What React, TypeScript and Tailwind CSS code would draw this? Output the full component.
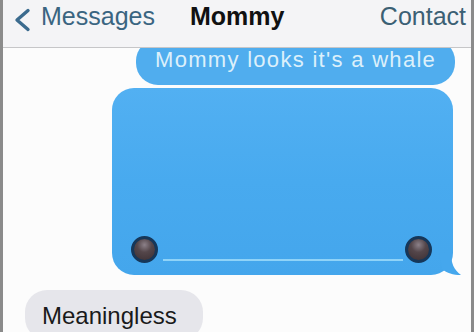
import React from "react";

const FONT = "font-['Liberation_Sans',Arial,sans-serif]";

function Chevron() {
  return (
    <svg width="18" height="24" viewBox="0 0 18 24" className="mt-[4px] shrink-0">
      <path d="M15 2.5 L4 12 L15 21.5" fill="none" stroke="#3b6b8e" strokeWidth="3.4" strokeLinecap="round" strokeLinejoin="round" />
    </svg>
  );
}

function Dot() {
  return (
    <div className="w-[27px] h-[27px] shrink-0 rounded-full border-[3px] border-[#163759] bg-[radial-gradient(circle_at_50%_28%,#8c8189_0%,#54464a_40%,#3b2f33_100%)]" />
  );
}

function Tail() {
  return (
    <svg width="24" height="22" viewBox="0 0 24 22" className="absolute right-[-10px] bottom-0">
      <path d="M0 0 L12 0 C12 10 15 17 22 22 C14 22 8 20 3 16 Z" fill="#45a7ed" />
    </svg>
  );
}

export default function App() {
  return (
    <div className={`w-[474px] h-[332px] overflow-hidden bg-[#fcfcfc] border-x-[3px] border-[#8b8b8b] flex flex-col ${FONT}`}>
      {/* nav bar */}
      <div className="relative z-10 h-[48px] shrink-0 bg-[#f4f4f6] border-b border-[#c6c6c8] flex items-start pt-[4px] pl-[10px] pr-[5px]">
        <Chevron />
        <span className="ml-[10px] text-[25px] leading-none text-[#3a6581]">Messages</span>
        <span className="ml-[35px] text-[25px] leading-none font-bold text-[#111]">Mommy</span>
        <span className="ml-auto text-[25px] leading-none text-[#3b6074]">Contact</span>
      </div>

      {/* outgoing, partly under the bar */}
      <div className="-mt-[9px] ml-[133px] w-[319px] h-[46px] shrink-0 rounded-[22px] bg-[#50adee] pt-[10px] pl-[19px]">
        <span className="text-[22px] leading-none tracking-[1.3px] text-[#dcf0fb] whitespace-nowrap">Mommy looks it's a whale</span>
      </div>

      {/* the whale */}
      <div className="relative mt-[3px] ml-[109px] w-[341px] h-[187px] shrink-0 rounded-[22px] bg-[linear-gradient(180deg,#52b0f2_0%,#48aaef_50%,#44a6ec_100%)] flex flex-col justify-end pl-[19px] pr-[21px] pb-[12px]">
        <div className="flex items-end">
          <Dot />
          <div className="flex-1 h-[2px] mb-[2px] ml-[5px] mr-[2px] bg-[#8fd3f8]" />
          <Dot />
        </div>
        <Tail />
      </div>

      {/* incoming */}
      <div className="mt-[15px] ml-[22px] w-[178px] h-[50px] shrink-0 rounded-[22px] bg-[#e6e6eb] pt-[14px] pl-[17px]">
        <span className="text-[24px] leading-none text-[#1a1a1a]">Meaningless</span>
      </div>
    </div>
  );
}
